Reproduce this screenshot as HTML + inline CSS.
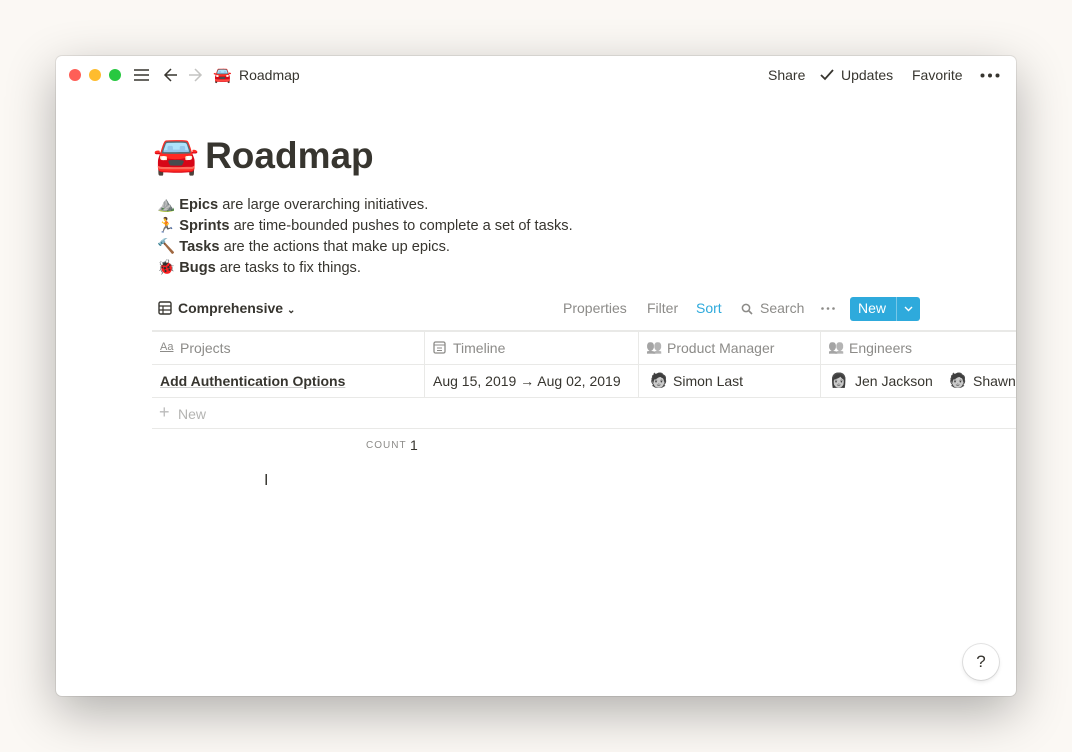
<!DOCTYPE html>
<html><head><meta charset="utf-8"><style>
*{margin:0;padding:0;box-sizing:border-box}
body{width:1072px;height:752px;background:#fbf8f4;font-family:"Liberation Sans",sans-serif;color:#37352f;position:relative;overflow:hidden}
.win{position:absolute;left:56px;top:56px;width:960px;height:640px;background:#fff;border-radius:6px;box-shadow:0 16px 50px rgba(0,0,0,.3),0 0 0 1px rgba(0,0,0,.08);overflow:hidden}
.a{position:absolute;white-space:nowrap}
.dot{position:absolute;top:13px;width:12px;height:12px;border-radius:50%}
.t{font-size:14px}
.g{color:#8c8b88}
.hl{position:absolute;left:96px;right:0;height:1px;background:#e9e9e7}
.vl{position:absolute;width:1px;background:#e9e9e7;top:275px;height:66px}
</style></head><body>
<div class="win">
<div class="dot" style="left:13px;background:#fe5f57"></div>
<div class="dot" style="left:33px;background:#febc2e"></div>
<div class="dot" style="left:53px;background:#28c840"></div>
<svg class="a" style="left:77px;top:12px" width="17" height="14"><path d="M1 2h15M1 7h15M1 12h15" stroke="#37352f" stroke-width="1.6"/></svg>
<svg class="a" style="left:107px;top:11px" width="16" height="16"><path d="M14 8H2M8 2L2 8l6 6" stroke="#37352f" stroke-width="1.5" fill="none"/></svg>
<svg class="a" style="left:131px;top:11px" width="16" height="16"><path d="M2 8h12M8 2l6 6-6 6" stroke="#c4c4c2" stroke-width="1.5" fill="none"/></svg>
<div class="a t" style="left:157px;top:10px;font-size:15px">🚘</div>
<div class="a t" style="left:183px;top:11px">Roadmap</div>
<div class="a t" style="left:712px;top:11px">Share</div>
<svg class="a" style="left:764px;top:13px" width="14" height="12"><path d="M1 6l4 4 8-9" stroke="#37352f" stroke-width="1.8" fill="none"/></svg>
<div class="a t" style="left:785px;top:11px">Updates</div>
<div class="a t" style="left:856px;top:11px">Favorite</div>
<svg class="a" style="left:924px;top:17px" width="20" height="5"><circle cx="2.5" cy="2.5" r="2" fill="#37352f"/><circle cx="10" cy="2.5" r="2" fill="#37352f"/><circle cx="17.5" cy="2.5" r="2" fill="#37352f"/></svg>

<div class="a" style="left:97px;top:76px;font-size:37px;font-weight:bold;line-height:48px">🚘<span style="margin-left:6px">Roadmap</span></div>
<div class="a" style="left:101px;top:139px;line-height:21px;font-size:14.6px">⛰️ <b>Epics</b> are large overarching initiatives.<br>🏃 <b>Sprints</b> are time-bounded pushes to complete a set of tasks.<br>🔨 <b>Tasks</b> are the actions that make up epics.<br>🐞 <b>Bugs</b> are tasks to fix things.</div>

<svg class="a" style="left:102px;top:245px" width="14" height="14"><rect x="1" y="1" width="12" height="12" rx="1.5" stroke="#37352f" fill="none" stroke-width="1.4"/><path d="M1 5h12M1 9h12M5 5v8" stroke="#37352f" stroke-width="1.2"/></svg>
<div class="a t" style="left:122px;top:244px;font-weight:bold">Comprehensive <span style="font-size:10px">⌄</span></div>
<div class="a t g" style="left:507px;top:244px">Properties</div>
<div class="a t g" style="left:591px;top:244px">Filter</div>
<div class="a t" style="left:640px;top:244px;color:#2eaadc">Sort</div>
<svg class="a" style="left:685px;top:247px" width="12" height="12"><circle cx="5" cy="5" r="3.6" stroke="#8c8b88" fill="none" stroke-width="1.5"/><path d="M8 8l3 3" stroke="#8c8b88" stroke-width="1.6"/></svg>
<div class="a t g" style="left:704px;top:244px">Search</div>
<svg class="a" style="left:765px;top:251px" width="14" height="3"><circle cx="1.5" cy="1.5" r="1.3" fill="#8c8b88"/><circle cx="7" cy="1.5" r="1.3" fill="#8c8b88"/><circle cx="12.5" cy="1.5" r="1.3" fill="#8c8b88"/></svg>
<div class="a" style="left:794px;top:241px;width:70px;height:24px;background:#2eaadc;border-radius:3px;color:#fff;font-size:14px;padding:3px 0 0 8px">New<span style="position:absolute;left:46px;top:0;width:1px;height:24px;background:rgba(255,255,255,.35)"></span><svg style="position:absolute;left:54px;top:9px" width="9" height="6"><path d="M1 1l3.5 3.5L8 1" stroke="#fff" stroke-width="1.4" fill="none"/></svg></div>

<div class="hl" style="top:274px;height:2px"></div>
<div class="hl" style="top:308px"></div>
<div class="hl" style="top:341px"></div>
<div class="hl" style="top:372px"></div>
<div class="vl" style="left:368px"></div><div class="vl" style="left:582px"></div><div class="vl" style="left:764px"></div>

<div class="a g" style="left:104px;top:285px;font-size:11px;text-decoration:underline">Aa</div>
<div class="a t g" style="left:124px;top:284px">Projects</div>
<svg class="a" style="left:377px;top:284px" width="13" height="14"><rect x="1" y="2" width="11" height="11" rx="1.5" stroke="#8c8b88" fill="none" stroke-width="1.3"/><path d="M1 5h11M4 8h5M4 10.5h5" stroke="#8c8b88" stroke-width="1"/></svg>
<div class="a t g" style="left:397px;top:284px">Timeline</div>
<div class="a g" style="left:590px;top:283px;font-size:13px;filter:grayscale(1);opacity:.6">👥</div>
<div class="a t g" style="left:611px;top:284px">Product Manager</div>
<div class="a g" style="left:772px;top:283px;font-size:13px;filter:grayscale(1);opacity:.6">👥</div>
<div class="a t g" style="left:793px;top:284px">Engineers</div>

<div class="a t" style="left:104px;top:317px;font-weight:bold;text-decoration:underline;text-decoration-color:#ccc">Add Authentication Options</div>
<div class="a t" style="left:377px;top:317px">Aug 15, 2019 → Aug 02, 2019</div>
<div class="a" style="left:594px;top:316px;font-size:14px;filter:grayscale(1)">🧑</div>
<div class="a t" style="left:617px;top:317px">Simon Last</div>
<div class="a" style="left:774px;top:316px;font-size:14px;filter:grayscale(1)">👩</div>
<div class="a t" style="left:799px;top:317px">Jen Jackson</div>
<div class="a" style="left:893px;top:316px;font-size:14px;filter:grayscale(1)">🧑</div>
<div class="a t" style="left:917px;top:317px">Shawn</div>

<div class="a g" style="left:103px;top:346px;font-size:18px;color:#bbb">+</div>
<div class="a t" style="left:122px;top:350px;color:#b4b4b2">New</div>
<div class="a g" style="left:310px;top:384px;font-size:10px;letter-spacing:1px">COUNT</div>
<div class="a" style="left:354px;top:381px;font-size:14px">1</div>
<div class="a" style="left:208px;top:416px;font-size:16px">I</div>
<div class="a" style="left:907px;top:588px;width:36px;height:36px;border-radius:50%;background:#fff;box-shadow:0 0 0 1px rgba(0,0,0,.1),0 2px 4px rgba(0,0,0,.1);text-align:center;line-height:36px;font-size:17px">?</div>
</div>
</body></html>
